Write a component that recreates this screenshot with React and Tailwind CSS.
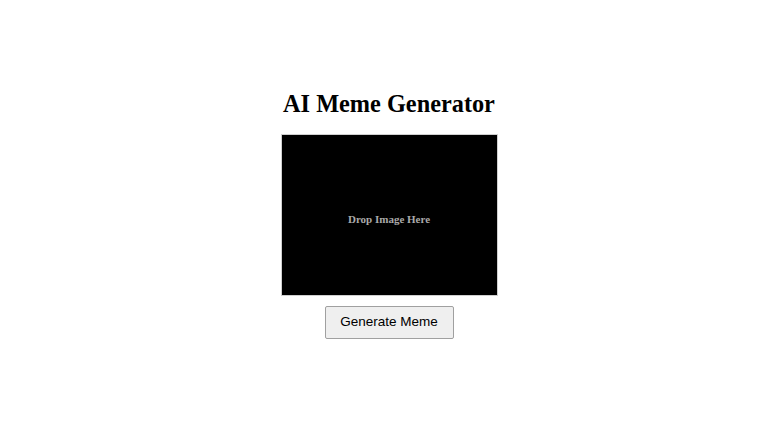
export default function App() {
  return (
    <div className="w-[768px] h-[432px] bg-white flex flex-col items-center pt-[89px] pl-[10px]">
      <h1 className="text-[24.3px] leading-[30px] font-bold text-black font-['Liberation_Serif',serif]">
        AI Meme Generator
      </h1>
      <div className="mt-[15px] w-[217px] h-[162px] bg-black border border-[#cfcfcf] flex items-center justify-center pt-[8px]">
        <span className="text-[11px] font-bold text-[#a9a9a9] font-['Liberation_Serif',serif]">
          Drop Image Here
        </span>
      </div>
      <button className="mt-[10px] w-[129px] h-[33px] bg-[#efefef] border border-[#a0a0a0] rounded-[2px] text-[13.5px] text-black font-['Liberation_Sans',Arial,sans-serif]">
        Generate Meme
      </button>
    </div>
  );
}
